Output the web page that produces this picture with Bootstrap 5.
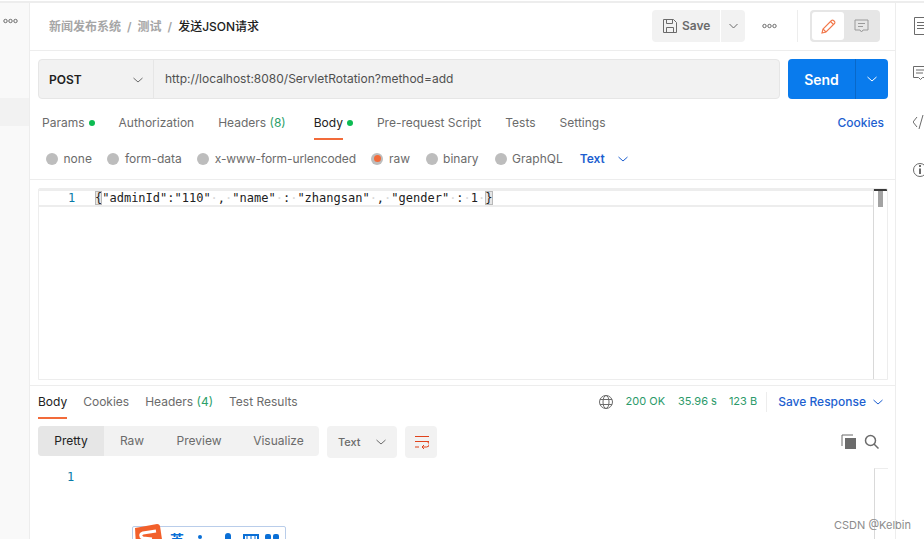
<!DOCTYPE html>
<html lang="zh">
<head>
<meta charset="utf-8">
<title>Postman</title>
<link href="https://cdn.jsdelivr.net/npm/bootstrap@5.3.0/dist/css/bootstrap.min.css" rel="stylesheet">
<style>
html,body{height:539px;overflow:hidden;background:#fff}
body{font-family:Inter,"Noto Sans CJK SC",sans-serif;font-size:12px;color:#6b6b6b;padding-top:1px}
svg{display:block;flex:none}
.app{height:538px;border-top:2px solid #ededed;overflow:hidden}
.side-l{width:30px;flex:none;background:#f9f9f9;border-right:1px solid #ededed;position:relative;padding-top:15px}
.side-l .dots{margin-left:3px}
.side-sel{height:28px;background:#f2f2f2;margin-top:74px}
.side-r{width:29px;flex:none;border-left:1px solid #ededed;overflow:hidden;padding:14px 0 0 17px}
.side-r svg{margin-bottom:30px}
.mainc{flex:1 1 0;min-width:0;position:relative}
.head{height:48px;border-bottom:1px solid #ededed;padding:7px 15px 0 19px}
.crumb{font-size:12px;font-weight:600;color:#a6a6a6;gap:6px;padding-bottom:7px}
.crumb b{font-weight:500;color:#212121}
.btn-save{height:32px;width:68px;background:#f2f2f2;border-radius:4px 0 0 4px;font-weight:600;color:#6b6b6b;gap:5px;padding-left:11px}
.btn-savec{height:32px;width:24px;background:#f2f2f2;border-radius:0 4px 4px 0;margin-left:1px}
.ooo{height:32px;margin-left:17px}
.mode{width:70px;height:32px;background:#e6e6e6;border-radius:4px;padding:2px}
.mode-on{width:32px;height:28px;background:#fff;border-radius:3px}
.vsep{width:1px;height:32px;background:#ededed;margin:0 12px 0 20px}
.urlrow{padding:8px 7px 0 8px;height:49px}
.urlbox{height:40px;flex:1 1 0;background:#f2f2f2;border:1px solid #e6e6e6;border-radius:4px;margin-right:8px}
.method{width:115px;border-right:1px solid #e6e6e6;padding:1px 10px 0 10px;font-weight:600;color:#212121;line-height:38px}
.urltxt{padding-left:11px;line-height:38px;color:#505050}
.sendb{width:100px;height:40px;background:#097bed;border-radius:4px;color:#fff}
.sendm{width:67px;font-size:14px;font-weight:600;text-align:center;line-height:41px}
.sendc{width:33px;border-left:1px solid #0868c9;height:40px}
.tabs{height:47px;padding:0 11px 0 12px}
.tabi{position:relative;height:47px;line-height:46px;margin-right:24px;color:#6b6b6b;white-space:nowrap}
.tabi.on{color:#212121;margin-right:0}
.tabi.on::after{content:"";position:absolute;left:0;right:0;bottom:7px;height:2px;background:#f26b3a}
.tabi-h{margin-right:28px}
.gdot{display:inline-block;width:6px;height:6px;border-radius:50%;background:#0cbb52;margin-left:4px;vertical-align:1px}
.gnum{color:#2ca06a}
.linkb{font-weight:500;color:#1d5fd0}
.opts{height:33px;padding:0 0 9px 16px;border-bottom:1px solid #ededed}
.radi{width:12px;height:12px;border-radius:50%;background:#bdbdbd;flex:none;margin-right:5.5px}
.radi.on{position:relative}
.radi.on::after{content:"";position:absolute;left:2.5px;top:2.5px;width:7px;height:7px;border-radius:50%;background:#f26b3a}
.opt{margin-right:15.5px;white-space:nowrap}
.opt-w{letter-spacing:-.1px}
.opt-b{margin-right:16px}
.opt-g{margin-right:17px}
.txt-arrow{margin-left:13px}
.editor{margin:8px 7px 0 8px;height:192px;border:1px solid #ededed;border-radius:2px 2px 0 0;position:relative;overflow:hidden}
.cline{border-top:2px solid #ededed;border-bottom:2px solid #ededed;box-sizing:content-box;height:14px;font:12px/14px "DejaVu Sans Mono",monospace;color:#212121;white-space:pre;margin-right:13px;display:flex}
.gut{width:56px;flex:none;padding-left:29px;color:#097aa8}
.ws{color:#d8d8d8}
.brk{background:#e6e6e6;outline:1px solid #b8b8b8;outline-offset:-1px}
.sbar{position:absolute;right:0;top:0;bottom:0;width:14px;border-left:1px solid #d9d9d9}
.sbar i{position:absolute;top:0;left:0;right:0;height:2px;background:#3a3a3a}
.sbar u{position:absolute;top:2px;left:4px;width:5px;height:16px;background:#a3a3a3}
.resp{border-top:1px solid #ededed;margin-top:5px;padding:0 8px;position:relative}
.rtabs{height:33px}
.rtab{position:relative;line-height:31px;height:33px;margin-right:16px;color:#6b6b6b;white-space:nowrap}
.rtab.on{color:#212121}
.rtab.on::after{content:"";position:absolute;left:0;right:0;bottom:0;height:2px;background:#f26b3a}
.rstat{height:31px;padding-right:4px}
.globe{margin-right:13px}
.ok{color:#2c9a6a;font-size:11px}
.ok-s{margin-left:13px}
.ok-t{margin-left:12px}
.vsep2{width:1px;height:20px;background:#ededed;margin:0 11px 0 9px}
.srsp{margin-right:7px}
.seg{height:30px;width:281px;background:#f2f2f2;border-radius:4px;margin-top:7px;overflow:hidden}
.seg span{line-height:30px;text-align:center}
.seg .on{background:#e6e6e6;color:#212121;width:66px}
.seg-raw{width:56px}
.seg-pre{width:78px}
.seg-vis{width:81px}
.txtb{height:32px;width:70px;background:#f2f2f2;border-radius:4px;margin:7px 0 0 8px;font-size:11px;font-weight:500;padding:0 11px}
.wrapb{width:32px;height:32px;background:#f2f2f2;border-radius:4px;margin:7px 0 0 8px}
.rtools{margin-top:7px;height:30px;padding-right:8px}
.rnum{font:12px/14px "DejaVu Sans Mono",monospace;color:#097aa8;padding:12px 0 0 29px}
.rscroll{position:absolute;left:844px;top:82px;width:14px;height:80px;border-left:1px solid #d9d9d9;border-top:1px solid #ededed}
.ime{position:absolute;left:102px;top:140px;width:154px;height:30px;border:1px solid #b9cdea;border-radius:2px;background:#fff;color:#0a6fd6}
.ime-logo{position:absolute;left:-1px;top:-5px}
.ime-zh{position:absolute;left:37px;top:5px;font-size:14px;line-height:16px;font-weight:700}
.ime-ico{position:absolute;left:64px;top:5px}
.wm{position:absolute;left:834px;top:517px;font-size:11px;color:#8c8c8c;white-space:nowrap}
</style>
</head>
<body>
<div class="app d-flex">
  <div class="side-l">
    <svg class="dots" width="15" height="6" viewBox="0 0 15 6" fill="none" stroke="#6b6b6b"><circle cx="2.5" cy="3" r="1.7"/><circle cx="7.5" cy="3" r="1.7"/><circle cx="12.5" cy="3" r="1.7"/></svg>
    <div class="side-sel"></div>
  </div>
  <div class="mainc d-flex flex-column">
    <div class="head d-flex justify-content-between">
      <div class="crumb d-flex align-items-center"><span>新闻发布系统</span><span>/</span><span>测试</span><span>/</span><b>发送JSON请求</b></div>
      <div class="d-flex align-items-start">
        <div class="btn-save d-flex align-items-center">
          <svg width="14" height="14" viewBox="0 0 14 14" fill="none" stroke="#6b6b6b"><path d="M.5.5h10l3 3v10H.5z"/><path d="M3.500.5v4h6v-4M3.500 13.500v-5h7v5"/></svg>Save
        </div>
        <div class="btn-savec d-flex align-items-center justify-content-center">
          <svg width="9" height="6" viewBox="0 0 9 6" fill="none" stroke="#6b6b6b"><path d="M.5 1l4 4 4-4"/></svg>
        </div>
        <div class="ooo d-flex align-items-center">
          <svg width="15" height="6" viewBox="0 0 15 6" fill="none" stroke="#6b6b6b"><circle cx="2.5" cy="3" r="1.7"/><circle cx="7.5" cy="3" r="1.7"/><circle cx="12.5" cy="3" r="1.7"/></svg>
        </div>
        <div class="vsep"></div>
        <div class="mode d-flex">
          <div class="mode-on d-flex align-items-center justify-content-center">
            <svg width="15" height="15" viewBox="0 0 15 15" fill="none" stroke="#f2784b" stroke-width="1.1"><path d="M1 14l1-4 8.500-8.500a1.400 1.400 0 0 1 2 0l1 1a1.400 1.400 0 0 1 0 2L5 13z"/><path d="M9.500 2.500l3 3M2 10l3 3"/></svg>
          </div>
          <div class="flex-fill d-flex align-items-center justify-content-center">
            <svg width="15" height="15" viewBox="0 0 15 15" fill="none" stroke="#9a9a9a"><path d="M1 1h13v10H9l-1.500 2L6 11H1z"/><path d="M4 4.500h7M4 7.500h5"/></svg>
          </div>
        </div>
      </div>
    </div>
    <div class="urlrow d-flex">
      <div class="urlbox d-flex">
        <div class="method d-flex justify-content-between align-items-center">POST
          <svg width="10" height="6" viewBox="0 0 10 6" fill="none" stroke="#6b6b6b"><path d="M.5 1l4.500 4 4.500-4"/></svg>
        </div>
        <div class="urltxt">http://localhost:8080/ServletRotation?method=add</div>
      </div>
      <div class="sendb d-flex">
        <div class="sendm">Send</div>
        <div class="sendc d-flex align-items-center justify-content-center">
          <svg width="10" height="6" viewBox="0 0 10 6" fill="none" stroke="#fff"><path d="M.5 1l4.500 4 4.500-4"/></svg>
        </div>
      </div>
    </div>
    <div class="tabs d-flex">
      <div class="tabi">Params<span class="gdot"></span></div>
      <div class="tabi">Authorization</div>
      <div class="tabi tabi-h">Headers <span class="gnum">(8)</span></div>
      <div class="tabi on">Body</div>
      <div class="tabi"><span class="gdot"></span></div>
      <div class="tabi">Pre-request Script</div>
      <div class="tabi">Tests</div>
      <div class="tabi">Settings</div>
      <div class="tabi linkb ms-auto me-0">Cookies</div>
    </div>
    <div class="opts d-flex align-items-center">
      <div class="radi"></div><div class="opt">none</div>
      <div class="radi"></div><div class="opt">form-data</div>
      <div class="radi"></div><div class="opt opt-w">x-www-form-urlencoded</div>
      <div class="radi on"></div><div class="opt">raw</div>
      <div class="radi"></div><div class="opt opt-b">binary</div>
      <div class="radi"></div><div class="opt opt-g">GraphQL</div>
      <div class="linkb fw-semibold">Text</div>
      <svg class="txt-arrow" width="10" height="6" viewBox="0 0 10 6" fill="none" stroke="#1d5fd0"><path d="M.5 1l4.500 4 4.500-4"/></svg>
    </div>
    <div class="editor">
      <div class="cline"><span class="gut">1</span><span><span class="brk">{</span>"adminId":"110"<span class="ws">·</span>,<span class="ws">·</span>"name"<span class="ws">·</span>:<span class="ws">·</span>"zhangsan"<span class="ws">·</span>,<span class="ws">·</span>"gender"<span class="ws">·</span>:<span class="ws">·</span>1<span class="ws">·</span><span class="brk">}</span></span></div>
      <div class="sbar"><i></i><u></u></div>
    </div>
    <div class="resp flex-fill">
      <div class="rtabs d-flex">
        <div class="rtab on">Body</div>
        <div class="rtab">Cookies</div>
        <div class="rtab">Headers <span class="gnum">(4)</span></div>
        <div class="rtab">Test Results</div>
        <div class="rstat ms-auto d-flex align-items-center">
          <svg class="globe" width="14" height="14" viewBox="0 0 14 14" fill="none" stroke="#6b6b6b"><circle cx="7" cy="7" r="6.500"/><ellipse cx="7" cy="7" rx="3" ry="6.500"/><path d="M1 4.500h12M1 9.500h12"/></svg>
          <span class="ok">200 OK</span>
          <span class="ok ok-s">35.96 s</span>
          <span class="ok ok-t">123 B</span>
          <div class="vsep2"></div>
          <span class="linkb srsp">Save Response</span>
          <svg width="10" height="6" viewBox="0 0 10 6" fill="none" stroke="#1d5fd0"><path d="M.5 1l4.500 4 4.500-4"/></svg>
        </div>
      </div>
      <div class="d-flex">
        <div class="seg d-flex">
          <span class="on">Pretty</span><span class="seg-raw">Raw</span><span class="seg-pre">Preview</span><span class="seg-vis">Visualize</span>
        </div>
        <div class="txtb d-flex justify-content-between align-items-center">Text
          <svg width="10" height="6" viewBox="0 0 10 6" fill="none" stroke="#6b6b6b"><path d="M.5 1l4.500 4 4.500-4"/></svg>
        </div>
        <div class="wrapb d-flex align-items-center justify-content-center">
          <svg width="15" height="14" viewBox="0 0 15 14" fill="none" stroke="#e0431c"><path d="M1 1.500h14M1 6.500h14M1 12h4M8 12h4.500a2.500 2.500 0 0 0 0-5.500"/><path d="M10 10l-2 2 2 2"/></svg>
        </div>
        <div class="rtools ms-auto d-flex align-items-center gap-2">
          <svg width="15" height="15" viewBox="0 0 15 15"><path fill="#6b6b6b" d="M4 4h11v11H4z"/><path fill="none" stroke="#6b6b6b" d="M1 12V1h11"/></svg>
          <svg width="15" height="15" viewBox="0 0 15 15" fill="none" stroke="#6b6b6b" stroke-width="1.500"><circle cx="6.500" cy="6.500" r="5"/><path d="M10 10l4.500 4.500"/></svg>
        </div>
      </div>
      <div class="rnum">1</div>
      <div class="rscroll"></div>
      <div class="ime">
        <span class="ime-zh">英</span>
        <svg class="ime-ico" width="90" height="16" viewBox="0 0 90 16" fill="#0a6fd6"><circle cx="3" cy="5" r="2"/><circle cx="11" cy="8" r="1"/><rect x="28" y="1" width="6" height="12" rx="3"/><path d="M25 8h1a5 5 0 0 0 10 0h1v3H25z"/><path d="M47 3h14v12H47z" fill="none" stroke="#0a6fd6" stroke-width="2"/><path d="M50 3v6M54 3v6M58 3v6M47 8h14" stroke="#0a6fd6"/><rect x="68" y="2" width="6" height="6" rx="2"/><rect x="76" y="2" width="6" height="6" rx="2"/><rect x="68" y="10" width="14" height="6"/></svg>
        <svg class="ime-logo" width="32" height="24" viewBox="0 0 32 24"><path fill="#f2602b" d="M3 6l22-4a3 3 0 0 1 3 2l3 20H4z"/><path fill="none" stroke="#fff" stroke-width="3" d="M24 9l-13 2c-3 1-3 4 0 5l9 1"/></svg>
      </div>
    </div>
  </div>
  <div class="side-r">
    <svg width="14" height="18" viewBox="0 0 14 18" fill="none" stroke="#6b6b6b"><path d="M1.500.500h10l3 3v14h-13z"/><path d="M4 5.500h8M4 8.500h8M4 11.500h8"/></svg>
    <svg width="14" height="18" viewBox="0 0 14 18" fill="none" stroke="#6b6b6b"><path d="M.5 1.500h15v11h-6l-2 2-2-2h-5z"/><path d="M3 5h10M3 8h7"/></svg>
    <svg width="14" height="18" viewBox="0 0 14 18" fill="none" stroke="#6b6b6b"><path d="M4 4L0 9l4 5M10 2L6 16"/></svg>
    <svg width="14" height="18" viewBox="0 0 14 18" fill="none" stroke="#6b6b6b"><circle cx="7" cy="9" r="6.500"/><path d="M7 7.500V13" stroke-width="2"/><path d="M7 4v2" stroke-width="2"/></svg>
  </div>
</div>
<div class="wm">CSDN @Kelbin</div>
<script src="https://cdn.jsdelivr.net/npm/bootstrap@5.3.0/dist/js/bootstrap.bundle.min.js"></script>
</body>
</html>
